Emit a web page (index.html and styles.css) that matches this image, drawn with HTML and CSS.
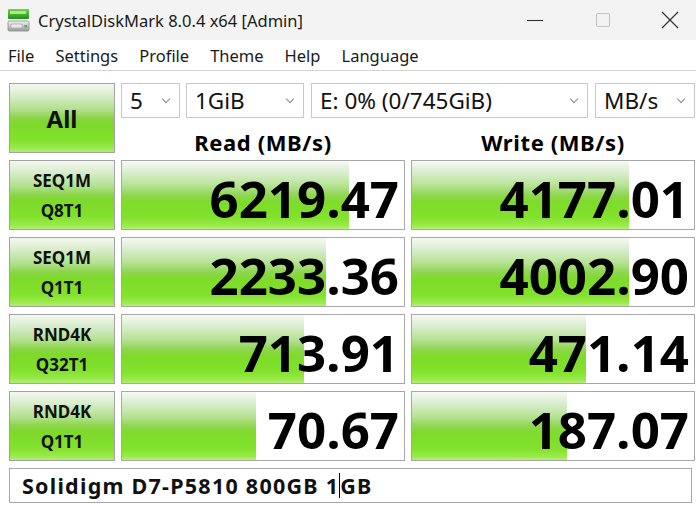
FILE: index.html
```html
<!DOCTYPE html>
<html>
<head>
<meta charset="utf-8">
<link rel="stylesheet" href="styles.css">
</head>
<body>
<div class="window">
  <div class="titlebar">
    <svg class="appicon" width="24" height="24" viewBox="0 0 24 24">
      <defs>
        <linearGradient id="gtop" x1="0" y1="0" x2="0" y2="1">
          <stop offset="0" stop-color="#6fd64a"/>
          <stop offset="1" stop-color="#1f8f1f"/>
        </linearGradient>
        <linearGradient id="gbot" x1="0" y1="0" x2="0" y2="1">
          <stop offset="0" stop-color="#f4f4f4"/>
          <stop offset="1" stop-color="#9a9a9a"/>
        </linearGradient>
      </defs>
      <rect x="1" y="1" width="21" height="10" rx="1" fill="url(#gtop)"/>
      <rect x="3" y="3" width="16" height="3" fill="#a8ec80"/>
      <rect x="1" y="13" width="21" height="10" rx="1.5" fill="url(#gbot)" stroke="#8a8a8a" stroke-width="0.8"/>
      <rect x="3.5" y="16" width="12" height="4" rx="2" fill="#e8e8e8" stroke="#9a9a9a" stroke-width="0.6"/>
      <rect x="17.5" y="17" width="2.5" height="2.5" fill="#3cb83c"/>
    </svg>
    <span class="title">CrystalDiskMark 8.0.4 x64 [Admin]</span>
    <div class="controls">
      <span class="ctl"><svg width="16" height="16" viewBox="0 0 16 16"><path d="M0 8.5h16" stroke="#333" stroke-width="1.1"/></svg></span>
      <span class="ctl"><svg width="16" height="16" viewBox="0 0 16 16"><rect x="1.5" y="1.5" width="13" height="13" rx="1.5" fill="none" stroke="#c4c4c4" stroke-width="1.1"/></svg></span>
      <span class="ctl"><svg width="18" height="18" viewBox="0 0 18 18"><path d="M1 1l16 16M17 1L1 17" stroke="#333" stroke-width="1.2"/></svg></span>
    </div>
  </div>
  <div class="menubar">
    <span class="menu">File</span>
    <span class="menu">Settings</span>
    <span class="menu">Profile</span>
    <span class="menu">Theme</span>
    <span class="menu">Help</span>
    <span class="menu">Language</span>
  </div>
  <div class="main">
    <div class="btn all">All</div>
    <div class="combos">
      <div class="combo c-count"><span>5</span><i class="chev"></i></div>
      <div class="combo c-size"><span>1GiB</span><i class="chev"></i></div>
      <div class="combo c-drive"><span>E: 0% (0/745GiB)</span><i class="chev"></i></div>
      <div class="combo c-unit"><span>MB/s</span><i class="chev"></i></div>
    </div>
    <div class="head">Read (MB/s)</div>
    <div class="head">Write (MB/s)</div>

    <div class="btn test">SEQ1M<br>Q8T1</div>
    <div class="cell"><div class="bar" style="width:80.5%"></div><span class="num">6219.47</span></div>
    <div class="cell"><div class="bar" style="width:77%"></div><span class="num">4177.01</span></div>

    <div class="btn test">SEQ1M<br>Q1T1</div>
    <div class="cell"><div class="bar" style="width:72.3%"></div><span class="num">2233.36</span></div>
    <div class="cell"><div class="bar" style="width:76.8%"></div><span class="num">4002.90</span></div>

    <div class="btn test">RND4K<br>Q32T1</div>
    <div class="cell"><div class="bar" style="width:64.5%"></div><span class="num">713.91</span></div>
    <div class="cell"><div class="bar" style="width:61.7%"></div><span class="num">471.14</span></div>

    <div class="btn test">RND4K<br>Q1T1</div>
    <div class="cell"><div class="bar" style="width:47.5%"></div><span class="num">70.67</span></div>
    <div class="cell"><div class="bar" style="width:55%"></div><span class="num">187.07</span></div>

    <div class="comment">Solidigm D7-P5810 800GB 1<span class="caret"></span>GB</div>
  </div>
</div>
</body>
</html>
```
FILE: styles.css
```css
* { box-sizing: border-box; }
html, body { margin: 0; padding: 0; background: #ffffff; }
body {
  font-family: "Noto Sans", "Open Sans", sans-serif;
  color: #000;
  width: 696px;
  height: 506px;
  overflow: hidden;
}
.titlebar {
  height: 40px;
  background: #f3f3f3;
  display: flex;
  align-items: center;
  padding-left: 7px;
}
.appicon { flex: none; }
.title {
  margin-left: 7px;
  font-size: 16.5px;
  color: #1a1a1a;
}
.controls {
  margin-left: auto;
  margin-right: -8px;
  display: flex;
  align-items: center;
  height: 40px;
}
.ctl {
  width: 67.5px;
  height: 40px;
  display: flex;
  align-items: center;
  justify-content: center;
}
.menubar {
  height: 31px;
  background: #fff;
  border-bottom: 1px solid #d4d4d4;
  display: flex;
  align-items: center;
  gap: 21px;
  padding-left: 8px;
}
.menu {
  font-size: 16.5px;
  color: #1a1a1a;
}
.main {
  display: grid;
  grid-template-columns: 106px 284px 284px;
  grid-template-rows: 35px 28px 70px 70px 70px 70px 35px;
  column-gap: 6px;
  row-gap: 7px;
  padding: 12px 0 0 9px;
}
.btn {
  border: 1px solid #a3a3a3;
  background: linear-gradient(to bottom, #f3f8f0 0%, #d6ecc8 18%, #b0e08a 38%, #8ad548 50%, #7dd92a 58%, #82e22c 82%, #9ae94c 94%, #b2ef72 100%);
  display: flex;
  align-items: center;
  justify-content: center;
  text-align: center;
  font-weight: 700;
  color: #111;
}
.all {
  grid-row: 1 / 3;
  grid-column: 1;
  font-size: 24px;
}
.test {
  font-size: 17px;
  line-height: 30px;
  padding-top: 2px;
}
.combos {
  grid-column: 2 / 4;
  grid-row: 1;
  display: flex;
  gap: 6px;
}
.combo {
  border: 1px solid #c9c9c9;
  background: #fff;
  display: flex;
  align-items: center;
  font-size: 22.5px;
  padding-left: 8px;
  color: #111;
}
.c-count { width: 59px; }
.c-size { width: 118px; }
.c-drive { width: 277px; margin-left: 1px; }
.c-unit { width: 100px; margin-left: 1px; }
.chev {
  margin-left: auto;
  margin-right: 10px;
  width: 6px;
  height: 6px;
  border-right: 1px solid #8a8a8a;
  border-bottom: 1px solid #8a8a8a;
  transform: rotate(45deg);
  margin-top: -4px;
}
.head {
  grid-row: 2;
  font-size: 22px;
  letter-spacing: 0.6px;
  font-weight: 700;
  text-align: center;
  line-height: 28px;
  padding-top: 3px;
}
.cell {
  position: relative;
  border: 1px solid #a8a8a8;
  background: #fff;
  display: flex;
  align-items: center;
  justify-content: flex-end;
}
.bar {
  position: absolute;
  left: 0;
  top: 0;
  bottom: 0;
  background: linear-gradient(to bottom, #f5f9f2 0%, #dbeed0 16%, #b6e294 36%, #8fd652 50%, #7edb2a 60%, #82e22c 84%, #9aea4c 95%, #b4f074 100%);
}
.num {
  position: relative;
  font-family: "Open Sans", "Noto Sans", sans-serif;
  font-weight: 700;
  font-size: 51px;
  line-height: 66px;
  padding-right: 5px;
  padding-top: 6px;
}
.comment {
  grid-column: 1 / 4;
  margin-right: 3px;
  border: 1px solid #a8a8a8;
  background: #fff;
  font-size: 21.5px;
  letter-spacing: 1.25px;
  font-weight: 700;
  display: flex;
  align-items: center;
  padding-left: 12px;
  color: #111;
}
.caret {
  display: inline-block;
  width: 1px;
  height: 25px;
  background: #000;
}
```
